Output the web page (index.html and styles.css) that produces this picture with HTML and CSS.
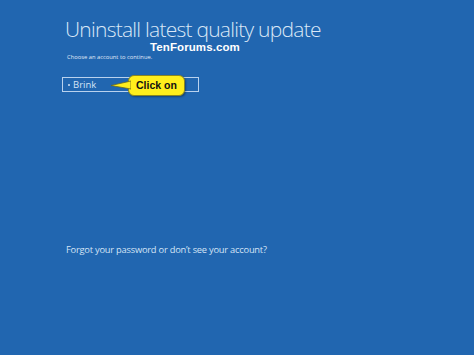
FILE: index.html
```html
<!DOCTYPE html>
<html lang="en">
<head>
    <meta charset="UTF-8">
    <meta name="viewport" content="width=device-width, initial-scale=1.0">
    <title>Uninstall latest quality update</title>
    <link rel="stylesheet" href="styles.css">
</head>
<body>
    <div class="screen">
        <h1 class="title">Uninstall latest quality update</h1>
        <div class="watermark">TenForums.com</div>
        <p class="subtitle">Choose an account to continue.</p>

        <div class="account-wrap">
            <div class="account">
                <span class="dot"></span>
                <span class="name">Brink</span>
            </div>
            <div class="callout">
                <svg class="callout-tail" width="21" height="12" viewBox="0 0 21 12">
                    <path d="M21 1 L1 5.5 L21 9 Z" fill="#ffee1c" stroke="#6b6a1e" stroke-width="0.8"/>
                </svg>
                <span class="callout-text">Click on</span>
            </div>
        </div>

        <a class="forgot" href="#">Forgot your password or don’t see your account?</a>
    </div>
</body>
</html>
```

FILE: styles.css
```css
body {
    margin: 0;
    background-color: #2166b0;
    font-family: 'Open Sans', 'Liberation Sans', sans-serif;
    color: #d9e7f6;
}

.screen {
    position: relative;
    height: 355px;
    padding-left: 64px;
    box-sizing: border-box;
    display: flex;
    flex-direction: column;
}

.title {
    margin: 16px 0 0 1px;
    font-size: 21px;
    font-weight: 300;
    line-height: 26px;
    letter-spacing: -0.75px;
    color: #dbe8f7;
}

.watermark {
    position: absolute;
    left: 150px;
    top: 42px;
    font-family: 'Liberation Sans', Arial, sans-serif;
    font-weight: bold;
    font-size: 11.5px;
    line-height: 11px;
    letter-spacing: 0.1px;
    color: #ffffff;
}

.subtitle {
    margin: 11px 0 0 3px;
    font-size: 5.8px;
    line-height: 8px;
    color: #e0ebf8;
}

.account-wrap {
    position: relative;
    margin-top: 16px;
    margin-left: -2px;
}

.account {
    width: 130px;
    height: 13px;
    border: 1.5px solid #b9d2ee;
    display: flex;
    align-items: center;
    padding-left: 5px;
    gap: 3px;
}

.dot {
    width: 2px;
    height: 2px;
    border-radius: 50%;
    background-color: #cfe0f4;
}

.name {
    font-size: 9.5px;
    color: #d4e4f6;
}

.callout {
    position: absolute;
    left: 48px;
    top: -2px;
    display: flex;
    align-items: center;
}

.callout-tail {
    margin-right: -3px;
    position: relative;
    z-index: 1;
}

.callout-text {
    background-color: #ffee1c;
    border: 1px solid #8a861f;
    border-radius: 6px;
    padding: 3px 7px;
    font-family: 'Liberation Sans', Arial, sans-serif;
    font-weight: bold;
    font-size: 10.5px;
    line-height: 13px;
    color: #111111;
    box-shadow: 1px 1px 2px rgba(0, 0, 0, 0.35);
}

.forgot {
    margin-top: 151px;
    margin-left: 2px;
    font-size: 9.3px;
    letter-spacing: -0.22px;
    color: #d4e4f6;
    text-decoration: none;
}
```
